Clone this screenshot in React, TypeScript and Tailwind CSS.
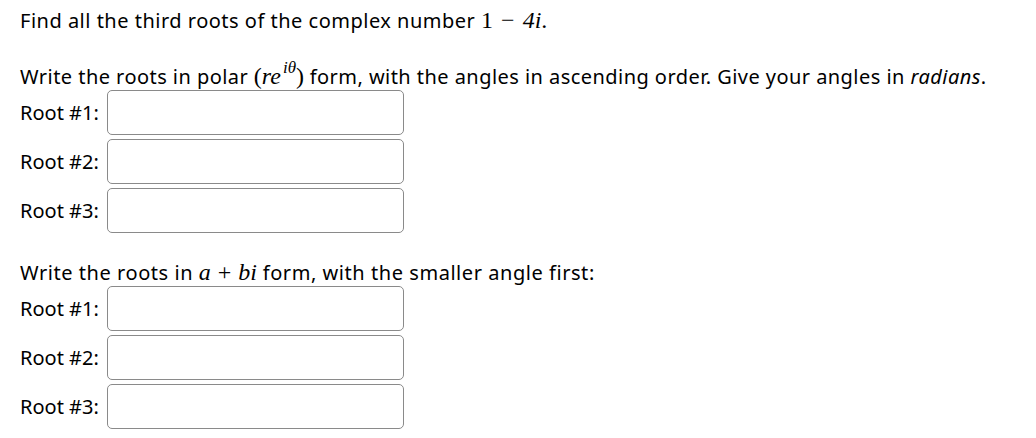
const math = { fontFamily: '"Liberation Serif", "DejaVu Serif", serif' };

function RootRow({ n }: { n: number }) {
    return (
        <div className="flex items-center">
            <span className="w-[87px]">Root #{n}:</span>
            <input
                type="text"
                className="h-[45px] w-[297px] rounded-[5px] border border-[#8a8a8a] bg-white"
            />
        </div>
    );
}

export default function App() {
    return (
        <div
            className="min-h-screen bg-white pl-5 pt-2 text-[20px] text-black"
            style={{ fontFamily: '"Noto Sans", sans-serif' }}
        >
            <p className="leading-[26px] tracking-[0.5px]">
                Find all the third roots of the complex number{' '}
                <span className="text-[24px] leading-none tracking-normal" style={math}>
                    1<span className="mx-[8px]">&minus;</span><i>4i</i>.
                </span>
            </p>

            <p className="mt-[30px] leading-[26px] tracking-[0.45px]">
                Write the roots in polar{' '}
                <span className="text-[24px] leading-none tracking-normal" style={math}>
                    (<i className="mr-[1px]">re</i>
                    <sup className="-top-[11px] ml-[1px] text-[17px] italic">iθ</sup>)
                </span>{' '}
                form, with the angles in ascending order. Give your angles in <i>radians</i>.
            </p>
            <div className="flex flex-col gap-1">
                <RootRow n={1} />
                <RootRow n={2} />
                <RootRow n={3} />
            </div>

            <p className="mt-[27px] leading-[26px] tracking-[0.55px]">
                Write the roots in{' '}
                <span className="text-[24px] leading-none tracking-normal" style={math}>
                    <i>a</i>
                    <span className="mx-[7px]">+</span>
                    <i>bi</i>
                </span>{' '}
                form, with the smaller angle first:
            </p>
            <div className="flex flex-col gap-1">
                <RootRow n={1} />
                <RootRow n={2} />
                <RootRow n={3} />
            </div>
        </div>
    );
}
